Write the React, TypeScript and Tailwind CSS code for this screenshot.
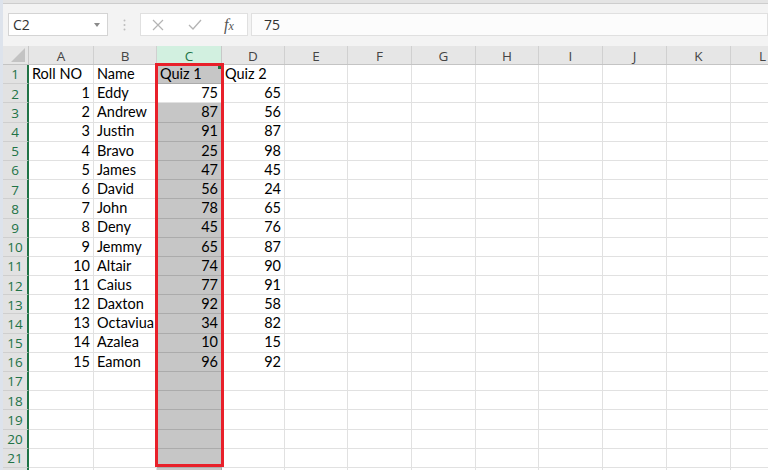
import React from "react";

const cols = ["A", "B", "C", "D", "E", "F", "G", "H", "I", "J", "K", "L"];
const widths = [65, 63, 65, 63, 63, 64, 64, 63, 64, 64, 64, 64];

const data: [string, string, string, string][] = [
  ["Roll NO", "Name", "Quiz 1", "Quiz 2"],
  ["1", "Eddy", "75", "65"],
  ["2", "Andrew", "87", "56"],
  ["3", "Justin", "91", "87"],
  ["4", "Bravo", "25", "98"],
  ["5", "James", "47", "45"],
  ["6", "David", "56", "24"],
  ["7", "John", "78", "65"],
  ["8", "Deny", "45", "76"],
  ["9", "Jemmy", "65", "87"],
  ["10", "Altair", "74", "90"],
  ["11", "Caius", "77", "91"],
  ["12", "Daxton", "92", "58"],
  ["13", "Octaviua", "34", "82"],
  ["14", "Azalea", "10", "15"],
  ["15", "Eamon", "96", "92"],
];

const rows = Array.from({ length: 22 }, (_, i) => i + 1);

function Cell({ r, c }: { r: number; c: number }) {
  const d = data[r - 1];
  let text = "";
  if (d && c < 4) text = d[c];
  const isHeaderRow = r === 1;
  const rightAlign = !isHeaderRow && (c === 0 || c === 2 || c === 3);
  const selected = c === 2 && r !== 2;
  const bg = selected ? "bg-[#c6c6c6] border-[#ababab]" : "bg-white border-[#e1e1e1]";
  return (
    <div
      className={`h-full shrink-0 border-r border-b ${bg} flex items-center overflow-visible whitespace-nowrap px-[3px] ${
        rightAlign ? "justify-end" : "justify-start"
      }`}
      style={{ width: widths[c] }}
    >
      <span className="text-[14.5px] text-black leading-none">{text}</span>
    </div>
  );
}

export default function App() {
  return (
    <div
      className="w-[768px] h-[470px] overflow-hidden flex bg-white relative"
      style={{ fontFamily: "Lato, 'Open Sans', sans-serif" }}
    >
      <div className="w-[3px] shrink-0 bg-[#dde3ec]" />
      <div className="flex-1 flex flex-col min-w-0">
        <div className="h-[4px] shrink-0 bg-[#e4e4e4] border-b border-[#cdcdcd]" />
        <div className="h-[42px] shrink-0 bg-[#f3f3f3] flex items-center pl-[5px] pb-[1px]">
          <div className="w-[100px] h-[23px] bg-white border border-[#d4d4d4] flex items-center justify-between pl-[4px] pr-[7px]">
            <span className="text-[14px] text-[#333]" style={{ fontFamily: "'Segoe UI', 'Open Sans', sans-serif" }}>C2</span>
            <svg width="6" height="4" viewBox="0 0 6 4"><path d="M0 0 L6 0 L3 4 Z" fill="#8a8a8a" /></svg>
          </div>
          <div className="w-[32px] flex justify-center">
            <svg width="3" height="12" viewBox="0 0 3 12">
              <circle cx="1.5" cy="1.5" r="1" fill="#bdbdbd" />
              <circle cx="1.5" cy="6" r="1" fill="#bdbdbd" />
              <circle cx="1.5" cy="10.5" r="1" fill="#bdbdbd" />
            </svg>
          </div>
          <div className="w-[108px] h-[23px] bg-white border border-[#e0e0e0] flex items-center">
            <div className="w-[34px] flex justify-center">
              <svg width="12" height="12" viewBox="0 0 12 12"><path d="M1 1 L11 11 M11 1 L1 11" stroke="#b4b4b4" strokeWidth="1.2" /></svg>
            </div>
            <div className="w-[40px] flex justify-center">
              <svg width="14" height="11" viewBox="0 0 14 11"><path d="M1 6 L5 10 L13 1" stroke="#b4b4b4" strokeWidth="1.3" fill="none" /></svg>
            </div>
            <div className="flex-1 flex justify-center pr-[4px]">
              <span className="text-[16px] italic text-[#555]" style={{ fontFamily: "'Liberation Serif', serif" }}>f<span className="text-[12px]">x</span></span>
            </div>
          </div>
          <div className="flex-1 h-[23px] ml-[3px] bg-[#fcfcfc] border border-[#e0e0e0] flex items-center pl-[12px]">
            <span className="text-[14px] text-[#333]" style={{ fontFamily: "'Segoe UI', 'Open Sans', sans-serif" }}>75</span>
          </div>
        </div>
        <div className="flex-1 relative overflow-hidden">
          {/* column header */}
          <div className="flex h-[19px] bg-[#e6e6e6] border-b border-[#c4c4c4]">
            <div className="w-[26px] shrink-0 relative border-r border-[#c8c8c8]">
              <svg className="absolute right-[3px] bottom-[2px]" width="14" height="14" viewBox="0 0 14 14"><path d="M14 0 L14 14 L0 14 Z" fill="#c3c3c3" /></svg>
            </div>
            {cols.map((c, i) => (
              <div
                key={c}
                className={`shrink-0 flex items-center justify-center border-r text-[13.5px] pt-[2px] ${
                  i === 2 ? "bg-[#d2f0e0] text-[#217346] border-[#c8c8c8]" : "text-[#444] border-[#d0d0d0]"
                }`}
                style={{ width: widths[i], fontFamily: "'Open Sans', sans-serif" }}
              >
                {c}
              </div>
            ))}
          </div>
          {rows.map((r) => (
            <div key={r} className="flex h-[19.2px]">
              <div className="w-[26px] shrink-0 bg-[#e2e2e2] border-b border-[#cfcfcf] border-r-2 border-r-[#217346] flex items-center justify-center text-[13.5px] text-[#217346] pt-[1px]" style={{ fontFamily: "'Open Sans', sans-serif" }}>
                {r < 22 ? r : ""}
              </div>
              {cols.map((_, c) => (
                <Cell key={c} r={r} c={c} />
              ))}
            </div>
          ))}
          {/* fill handle mark */}
          <div className="absolute left-[215px] top-[20px] w-[3px] h-[3px] bg-[#217346]" />
          {/* red annotation box */}
          <div className="absolute left-[152px] top-[17px] w-[69px] h-[404px] border-[3px] border-[#e8202a]" />
        </div>
      </div>
    </div>
  );
}
